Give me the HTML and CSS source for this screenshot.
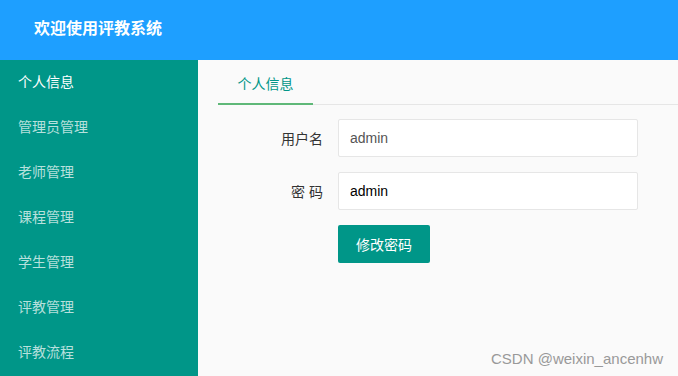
FILE: index.html
```html
<!DOCTYPE html>
<html lang="zh-CN">
<head>
<meta charset="utf-8">
<title>欢迎使用评教系统</title>
<link rel="stylesheet" href="styles.css">
</head>
<body>
<div class="app">
  <header class="header">
    <div class="logo">欢迎使用评教系统</div>
  </header>
  <div class="main">
    <nav class="side">
      <a class="nav-item active">个人信息</a>
      <a class="nav-item">管理员管理</a>
      <a class="nav-item">老师管理</a>
      <a class="nav-item">课程管理</a>
      <a class="nav-item">学生管理</a>
      <a class="nav-item">评教管理</a>
      <a class="nav-item">评教流程</a>
    </nav>
    <section class="content">
      <div class="tab-title">
        <div class="tab this">个人信息</div>
      </div>
      <form class="form">
        <div class="form-item">
          <label class="form-label">用户名</label>
          <div class="input readonly">admin</div>
        </div>
        <div class="form-item">
          <label class="form-label">密 码</label>
          <div class="input">admin</div>
        </div>
        <div class="form-item">
          <label class="form-label"></label>
          <button type="button" class="btn">修改密码</button>
        </div>
      </form>
    </section>
  </div>
  <div class="watermark">CSDN @weixin_ancenhw</div>
</div>
</body>
</html>
```
FILE: styles.css
```css
* { box-sizing: border-box; }
html, body { margin: 0; padding: 0; }
body {
  width: 678px;
  height: 376px;
  overflow: hidden;
  font-family: "Liberation Sans", "Noto Sans CJK SC", sans-serif;
  font-size: 14px;
  color: #333;
  background: #fafafa;
}
.app {
  position: relative;
  height: 376px;
  display: flex;
  flex-direction: column;
}
.header {
  height: 60px;
  flex: none;
  background: #1e9fff;
  display: flex;
  align-items: center;
}
.logo {
  padding-left: 34px;
  color: #fff;
  font-size: 16px;
  font-weight: bold;
  line-height: 20px;
  margin-top: -3px;
}
.main {
  flex: 1;
  display: flex;
  min-height: 0;
}
.side {
  width: 198px;
  flex: none;
  background: #009688;
  display: flex;
  flex-direction: column;
}
.nav-item {
  height: 45px;
  line-height: 45px;
  padding-left: 18px;
  color: rgba(255, 255, 255, 0.72);
  font-size: 14px;
}
.nav-item.active { color: #fff; }
.content {
  flex: 1;
  background: #fafafa;
  padding: 5px 0 0 20px;
}
.tab-title {
  height: 40px;
  border-bottom: 1px solid #e6e6e6;
  display: flex;
}
.tab {
  position: relative;
  min-width: 95px;
  padding: 0 15px;
  text-align: center;
  line-height: 39px;
  color: #009688;
  font-size: 14px;
}
.tab.this::after {
  content: "";
  position: absolute;
  left: 0;
  right: 0;
  bottom: -1px;
  height: 2px;
  background: #5fb878;
}
.form {
  padding-top: 14px;
  display: flex;
  flex-direction: column;
  gap: 15px;
}
.form-item {
  display: flex;
  align-items: center;
}
.form-label {
  width: 120px;
  padding-right: 15px;
  text-align: right;
  color: #333;
  font-size: 14px;
}
.input {
  width: 300px;
  height: 38px;
  line-height: 36px;
  padding-left: 11px;
  border: 1px solid #e6e6e6;
  border-radius: 2px;
  background: #fff;
  color: #000;
  font-size: 14px;
}
.input.readonly { color: #555; }
.btn {
  height: 38px;
  padding: 0 18px;
  border: none;
  border-radius: 2px;
  background: #009688;
  color: #fff;
  font-family: "Liberation Sans", "Noto Sans CJK SC", sans-serif;
  font-size: 14px;
}
.watermark {
  position: absolute;
  right: 15px;
  bottom: 9px;
  line-height: 17px;
  font-size: 15px;
  color: #999;
}
```
